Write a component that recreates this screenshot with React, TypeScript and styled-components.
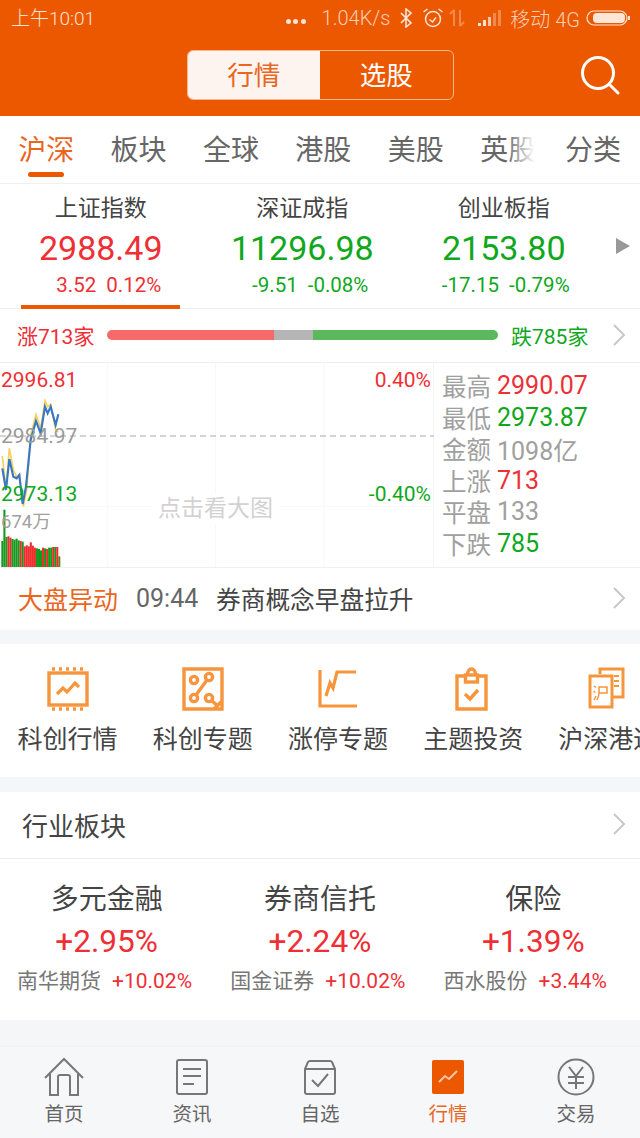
import React from "react";
import styled, { createGlobalStyle } from "styled-components";

const FONT = `Roboto, "Noto Sans CJK SC", sans-serif`;
const ORANGE = "#ec5800";
const RED = "#ee2f35";
const GREEN = "#0fa81c";
const ICON = "#f7953c";

const Global = createGlobalStyle`
  html, body { margin: 0; padding: 0; background: #fff; }
  body { font-family: ${FONT}; width: 640px; height: 1138px; overflow: hidden; }
  * { box-sizing: border-box; }
`;

const Page = styled.div`
  width: 640px; height: 1138px; display: flex; flex-direction: column; background: #f5f6f8; overflow: hidden;
`;
const Header = styled.header`
  height: 116px; background: ${ORANGE}; display: flex; flex-direction: column; flex: none;
`;
const StatusBar = styled.div`
  height: 36px; display: flex; align-items: center; padding: 0 10px 0 11px; color: #fde3d2; font-size: 19px; font-weight: 300; flex: none;
`;
const StatusLeft = styled.span`
  padding-bottom: 4px;
`;
const StatusRight = styled.div`
  margin-left: auto; display: flex; align-items: center; color: #fbd0b5; font-size: 20px;
`;
const StatusIcon = styled.svg<{ $ml: number }>`
  margin-left: ${(p) => p.$ml}px; flex: none;
`;
const Carrier = styled.span`
  margin-left: 9px;
`;
const Dots = styled.span`
  display: flex; gap: 2.5px; margin-right: 16px; padding-top: 6px;
  i { width: 5px; height: 5px; border-radius: 50%; background: #fde6d8; display: block; }
`;
const NavRow = styled.div`
  position: relative; height: 80px; display: flex; justify-content: center; padding-top: 14px;
`;
const Segment = styled.div`
  width: 267px; height: 50px; border: 1px solid #f9b78e; border-radius: 6px; display: flex; overflow: hidden;
`;
const SegItem = styled.div<{ $on?: boolean }>`
  width: 133px; display: flex; align-items: center; justify-content: center; font-size: 26.5px; line-height: 1; padding-top: 2px;
  background: ${(p) => (p.$on ? "#fef4ef" : "transparent")};
  color: ${(p) => (p.$on ? "#e9661f" : "#fff")};
`;
const SearchBtn = styled.svg`
  position: absolute; right: 18px; top: 18px; width: 42px; height: 42px;
`;
const Tabs = styled.nav`
  position: relative; height: 68px; flex: none; background: #fff; display: flex; border-bottom: 1px solid #f0f0f0; padding-left: 0;
`;
const Tab = styled.div<{ $on?: boolean }>`
  width: 92.4px; text-align: center; font-size: 28px; line-height: 69px; flex: none; position: relative;
  color: ${(p) => (p.$on ? "#e9661f" : "#666")};
  ${(p) => p.$on && `&:after{content:"";position:absolute;left:28px;top:56px;width:36px;height:5px;border-radius:3px;background:${ORANGE};}`}
`;
const TabFade = styled.div`
  position: absolute; left: 506px; top: 0; width: 34px; height: 66px; background: linear-gradient(90deg, rgba(255,255,255,0), #fff 85%);
`;
const TabFixed = styled.div`
  position: absolute; right: 0; top: 0; width: 92px; height: 66px; background: #fff; text-align: center; font-size: 28px; line-height: 69px; color: #666;
  padding-right: 2px;
`;
const IndexRow = styled.section`
  height: 125px; flex: none; background: #fff; display: flex; border-bottom: 1px solid #eee; position: relative;
`;
const IndexCol = styled.div<{ $on?: boolean }>`
  width: 201.5px; flex: none; display: flex; flex-direction: column; align-items: center; position: relative;
  ${(p) => p.$on && `&:after{content:"";position:absolute;left:21px;bottom:-1px;width:159px;height:4px;background:${ORANGE};}`}
`;
const IndexName = styled.div`
  font-size: 23px; line-height: 30px; margin-top: 10px; color: #444;
`;
const IndexValue = styled.div<{ $c: string }>`
  font-size: 34px; line-height: 40px; margin-top: 4px; color: ${(p) => p.$c}; font-weight: 400;
`;
const IndexChange = styled.div<{ $c: string; $shift?: number }>`
  font-size: 20.5px; line-height: 24px; margin-top: 5px; color: ${(p) => p.$c}; display: flex; gap: 10px; transform: translateX(${(p) => p.$shift ?? 0}px);
`;
const MoreArrow = styled.div`
  position: absolute; left: 616px; top: 54px; width: 0; height: 0; border-left: 14px solid #999; border-top: 8px solid transparent; border-bottom: 8px solid transparent;
`;
const BreadthRow = styled.section`
  height: 54px; flex: none; background: #fff; display: flex; align-items: center; padding: 0 14px 2px 17px; border-bottom: 1px solid #f0f0f0;
`;
const BreadthText = styled.span<{ $c: string }>`
  font-size: 21px; color: ${(p) => p.$c}; width: 77px; flex: none; white-space: nowrap;
`;
const Bar = styled.div`
  width: 391px; height: 10px; border-radius: 5px; overflow: hidden; display: flex; margin: 0 13px 0 13px; flex: none;
`;
const BarPart = styled.div<{ $w: number; $c: string }>`
  width: ${(p) => p.$w}px; background: ${(p) => p.$c}; flex: none;
`;
const Chevron = styled.svg`
  width: 14px; height: 24px; flex: none; margin-left: auto;
`;
const ChartRow = styled.section`
  height: 205px; flex: none; background: #fff; display: flex; border-bottom: 1px solid #f0f0f0;
`;
const ChartBox = styled.div`
  position: relative; width: 434px; height: 204px; flex: none; border-right: 1px solid #f5f5f5;
`;
const ChartSvg = styled.svg`
  position: absolute; inset: 0; width: 434px; height: 204px;
`;
const ChartLabel = styled.span<{ $c: string; $x: number; $y: number; $right?: boolean; $size?: number }>`
  position: absolute; top: ${(p) => p.$y}px; font-size: ${(p) => p.$size ?? 21}px; line-height: 24px; color: ${(p) => p.$c};
  ${(p) => (p.$right ? `right:${p.$x}px;` : `left:${p.$x}px;`)}
`;
const Tap = styled.span`
  position: absolute; left: 152px; top: 131px; padding: 0 6px; background: #fff; font-size: 23px; line-height: 30px; color: #d2d2d2;
`;
const Stats = styled.div`
  padding: 7px 0 0 8px; display: flex; flex-direction: column;
`;
const Stat = styled.div`
  display: flex; gap: 6px; height: 31.5px; align-items: center; font-size: 24.5px; white-space: nowrap;
`;
const StatKey = styled.span`
  color: #a0a0a0;
`;
const StatVal = styled.span<{ $c: string }>`
  color: ${(p) => p.$c}; font-size: 25px;
`;
const NewsRow = styled.section`
  height: 62px; flex: none; background: #fff; display: flex; align-items: center; padding: 0 14px 2px 18px;
`;
const NewsTag = styled.span`
  font-size: 25px; color: #e9661f; width: 118px; flex: none;
`;
const NewsTime = styled.span`
  font-size: 25px; color: #666; width: 80px; flex: none;
`;
const NewsText = styled.span`
  font-size: 24.7px; color: #444;
`;
const Shortcuts = styled.section`
  margin-top: 14px; height: 133px; flex: none; background: #fff; display: flex; overflow: hidden; padding-left: 0;
`;
const Shortcut = styled.div`
  width: 135.2px; flex: none; display: flex; flex-direction: column; align-items: center; padding-top: 22px; font-size: 25px; color: #444; white-space: nowrap;
  svg { width: 46px; height: 46px; display: block; }
  span { margin-top: 10px; line-height: 36px; }
`;
const Sector = styled.section`
  margin-top: 15px; height: 228px; flex: none; background: #fff; display: flex; flex-direction: column;
`;
const SectorHead = styled.div`
  height: 67px; flex: none; display: flex; align-items: center; padding: 0 14px 2px 22px; font-size: 26px; color: #444; border-bottom: 1px solid #f0f0f0;
`;
const SectorCards = styled.div`
  display: flex;
`;
const SectorCard = styled.div`
  width: 213.3px; flex: none; display: flex; flex-direction: column; align-items: center; padding-top: 22px;
`;
const SectorName = styled.div`
  font-size: 28px; line-height: 38px; color: #444;
`;
const SectorPct = styled.div`
  font-size: 31.6px; line-height: 40px; margin-top: 3px; color: ${RED};
`;
const SectorSub = styled.div`
  display: flex; gap: 11px; font-size: 21px; line-height: 28px; margin-top: 5px; white-space: nowrap; color: #777;
  align-self: flex-start; margin-left: 17px;
  b { font-weight: 400; color: ${RED}; }
`;
const TabBar = styled.footer`
  margin-top: auto; height: 92px; flex: none; background: #f6f7f9; display: flex; border-top: 1px solid #f0f1f3;
`;
const TabBarItem = styled.div<{ $on?: boolean }>`
  width: 128px; flex: none; display: flex; flex-direction: column; align-items: center; padding-top: 10px;
  font-size: 19.5px; color: ${(p) => (p.$on ? "#e9661f" : "#666")};
  svg { width: 40px; height: 40px; display: block; }
  span { margin-top: 5px; line-height: 26px; }
`;

const ChevronIcon = () => (
  <Chevron viewBox="0 0 14 24"><path d="M2 2l10 10L2 22" fill="none" stroke="#c8c8c8" strokeWidth="2" /></Chevron>
);

const blue = "7,325 18,390 28,297 40,350 50,355 58,345 68,432 78,380 92,240 108,183 122,220 135,140 143,160 152,140 167,195 175,163";
const yellow = "7,288 18,385 28,265 40,330 50,350 58,350 70,440 80,390 92,225 108,163 122,205 135,122 143,140 152,133 167,210 175,215";

const volumes: [number, string][] = [
  [78, "g"],[172, "g"],[90, "g"],[92, "r"],[88, "r"],[84, "g"],[82, "g"],[85, "g"],[80, "g"],[78, "r"],[76, "g"],[62, "r"],[65, "r"],[62, "r"],[74, "r"],[64, "r"],[58, "r"],[56, "g"],[54, "g"],[50, "g"],[58, "r"],[56, "g"],[54, "r"],[58, "g"],[58, "g"],[60, "r"],[60, "g"],[60, "r"],[32, "o"],
];

const Shortcut1 = () => (
  <svg viewBox="0 0 46 46" fill="none" stroke={ICON}>
    <rect x="4" y="7" width="38" height="32" strokeWidth="3.4" />
    <path d="M7 3h3M14 3h3M21 3h3M28 3h3M35 3h3M7 43h3M14 43h3M21 43h3M28 43h3M35 43h3" strokeWidth="3.4" />
    <path d="M12 28l6-6 4 4 8-9 4 4" strokeWidth="3.2" />
  </svg>
);
const Shortcut2 = () => (
  <svg viewBox="0 0 46 46" fill="none" stroke={ICON} strokeWidth="3.4">
    <path d="M4 3h38v40H4zM34 43l8-8" />
    <circle cx="14" cy="14" r="3.6" />
    <circle cx="29" cy="11" r="3.6" />
    <circle cx="14" cy="32" r="3.6" />
    <circle cx="29" cy="32" r="3.6" />
    <path d="M27 14L16 29M32 35l6 5" />
  </svg>
);
const Shortcut3 = () => (
  <svg viewBox="0 0 46 46" fill="none" stroke={ICON} strokeWidth="3.2">
    <path d="M5 4v36h37" />
    <path d="M11 30l4-13 3 5 4-16h19" />
  </svg>
);
const Shortcut4 = () => (
  <svg viewBox="0 0 46 46" fill="none" stroke={ICON} strokeWidth="3.4">
    <path d="M15 10H7v33h29V10h-8" />
    <rect x="15.5" y="9" width="12" height="7" />
    <path d="M17.5 9c0-8 8-8 8 0" />
    <path d="M15 28l5 5 8-9" />
  </svg>
);
const Shortcut5 = () => (
  <svg viewBox="0 0 46 46">
    <path d="M15 8V3h23v28h-12" fill="none" stroke={ICON} strokeWidth="3" />
    <rect x="5" y="10" width="22" height="31" fill="#fff" stroke={ICON} strokeWidth="3" />
    <path d="M29 10h5M29 15h5M29 20h5" stroke={ICON} strokeWidth="2" />
    <path d="M9 20l2 1.5M8.5 25l2 1.5M9 34l2-4M14 21h8v6h-8zM14 27c0 3-1 5-2 7" fill="none" stroke={ICON} strokeWidth="1.5" />
  </svg>
);

const HomeIcon = () => (
  <svg viewBox="0 0 40 40" fill="none" stroke="#777" strokeWidth="2">
    <path d="M1 21L20 2l19 19M6 17v21h8V20c0-1 1-2 2-2h8c1 0 2 1 2 2v18h8V17" />
  </svg>
);
const NewsIcon = () => (
  <svg viewBox="0 0 40 40" fill="none" stroke="#777" strokeWidth="2">
    <rect x="5" y="3" width="30" height="34" rx="2" />
    <path d="M11 12h18M11 19h18M11 27h11" />
  </svg>
);
const WatchIcon = () => (
  <svg viewBox="0 0 40 40" fill="none" stroke="#777" strokeWidth="2">
    <path d="M5 12l3-7c.4-1 1-1 2-1h20c1 0 1.6 0 2 1l3 7v23c0 1-1 2-2 2H7c-1 0-2-1-2-2zM5 12h30" />
    <path d="M12 23l6 6 10-12" />
  </svg>
);
const MarketIcon = () => (
  <svg viewBox="0 0 40 40">
    <rect x="4" y="3" width="32" height="34" rx="2" fill={ORANGE} />
    <path d="M11 25l6-6 4 3 8-8" fill="none" stroke="#fbc7a8" strokeWidth="2" />
  </svg>
);
const TradeIcon = () => (
  <svg viewBox="0 0 40 40" fill="none" stroke="#777" strokeWidth="2">
    <circle cx="20" cy="20" r="17.5" />
    <path d="M13 10l7 9 7-9M12 20h16M12 26h16M20 19v13" />
  </svg>
);

const stats: [string, string, string][] = [
  ["最高", "2990.07", RED],
  ["最低", "2973.87", GREEN],
  ["金额", "1098亿", "#a0a0a0"],
  ["上涨", "713", RED],
  ["平盘", "133", "#a0a0a0"],
  ["下跌", "785", GREEN],
];

const sectors = [
  { n: "多元金融", p: "+2.95%", s: "南华期货", q: "+10.02%" },
  { n: "券商信托", p: "+2.24%", s: "国金证券", q: "+10.02%" },
  { n: "保险", p: "+1.39%", s: "西水股份", q: "+3.44%" },
];

export default function App() {
  return (
    <Page>
      <Global />
      <Header>
        <StatusBar>
          <StatusLeft>上午10:01</StatusLeft>
          <StatusRight>
            <Dots><i /><i /><i /></Dots>
            <span>1.04K/s</span>
            <StatusIcon $ml={9} width="14" height="20" viewBox="0 0 14 20" fill="none" stroke="#fde6d8" strokeWidth="1.6">
              <path d="M2 5l10 10-5 4V1l5 4L2 15" />
            </StatusIcon>
            <StatusIcon $ml={9} width="22" height="22" viewBox="0 0 22 22" fill="none" stroke="#fde6d8" strokeWidth="1.5">
              <circle cx="11" cy="12" r="7.5" /><path d="M7.5 12.5l3 2.5 3.5-4.5M1.5 5l4-3M20.5 5l-4-3" />
            </StatusIcon>
            <StatusIcon $ml={5} width="16" height="20" viewBox="0 0 16 20" fill="none" stroke="#f28a4b" strokeWidth="2">
              <path d="M5 2v16M1 6l4-4M11 18V2M15 14l-4 4" />
            </StatusIcon>
            <StatusIcon $ml={13} width="23" height="18" viewBox="0 0 23 18">
              <rect x="0" y="14" width="3" height="3" fill="#fde6d8" /><rect x="5" y="11" width="3" height="6" fill="#fde6d8" /><rect x="10" y="8" width="3" height="9" fill="#f9c8aa" /><rect x="15" y="4" width="3" height="13" fill="#f28a4b" /><rect x="20" y="1" width="3" height="16" fill="#f28a4b" />
            </StatusIcon>
            <Carrier>移动 4G</Carrier>
            <StatusIcon $ml={6} width="44" height="18" viewBox="0 0 44 18">
              <rect x="1" y="2" width="40" height="14" rx="7" fill="none" stroke="#fde6d8" strokeWidth="1.2" />
              <rect x="7" y="4" width="32" height="10" rx="4" fill="#fde6d8" />
              <rect x="42" y="7" width="2" height="4" fill="#fde6d8" />
            </StatusIcon>
          </StatusRight>
        </StatusBar>
        <NavRow>
          <Segment>
            <SegItem $on>行情</SegItem>
            <SegItem>选股</SegItem>
          </Segment>
          <SearchBtn viewBox="0 0 42 42" fill="none" stroke="#fff" strokeWidth="3">
            <circle cx="18" cy="19" r="15.5" />
            <path d="M30 31l8 8" strokeLinecap="round" />
          </SearchBtn>
        </NavRow>
      </Header>
      <Tabs>
        <Tab $on>沪深</Tab><Tab>板块</Tab><Tab>全球</Tab><Tab>港股</Tab><Tab>美股</Tab><Tab>英股</Tab>
        <TabFade />
        <TabFixed>分类</TabFixed>
      </Tabs>
      <IndexRow>
        <IndexCol $on>
          <IndexName>上证指数</IndexName>
          <IndexValue $c={RED}>2988.49</IndexValue>
          <IndexChange $c={RED} $shift={8}><span>3.52</span><span>0.12%</span></IndexChange>
        </IndexCol>
        <IndexCol>
          <IndexName>深证成指</IndexName>
          <IndexValue $c={GREEN}>11296.98</IndexValue>
          <IndexChange $c={GREEN} $shift={8}><span>-9.51</span><span>-0.08%</span></IndexChange>
        </IndexCol>
        <IndexCol>
          <IndexName>创业板指</IndexName>
          <IndexValue $c={GREEN}>2153.80</IndexValue>
          <IndexChange $c={GREEN} $shift={2}><span>-17.15</span><span>-0.79%</span></IndexChange>
        </IndexCol>
        <MoreArrow />
      </IndexRow>
      <BreadthRow>
        <BreadthText $c={RED}>涨713家</BreadthText>
        <Bar>
          <BarPart $w={167} $c="#f86a6a" />
          <BarPart $w={39} $c="#b5b5b5" />
          <BarPart $w={185} $c="#5cb85c" />
        </Bar>
        <BreadthText $c={GREEN}>跌785家</BreadthText>
        <ChevronIcon />
      </BreadthRow>
      <ChartRow>
        <ChartBox>
          <ChartSvg viewBox="0 9 1302 612">
            <path d="M323 9v612M647 9v612M972 9v612M0 440h1302" stroke="#f7f7f7" strokeWidth="3" />
            <path d="M0 228h1302" stroke="#aaa" strokeWidth="3" strokeDasharray="18 12" />
            {volumes.map(([h, c], i) => (
              <rect key={i} x={4 + i * 6.1} y={621 - h} width={6.2} height={h} fill={c === "g" ? "#149a1f" : c === "r" ? "#f12c2c" : "#6f7a1e"} />
            ))}
            <polyline points={yellow} fill="none" stroke="#f8d25a" strokeWidth="5" />
            <polyline points={blue} fill="none" stroke="#3a78c4" strokeWidth="6.5" />
          </ChartSvg>
          <ChartLabel $c={RED} $x={1} $y={5}>2996.81</ChartLabel>
          <ChartLabel $c={RED} $x={2} $y={5} $right>0.40%</ChartLabel>
          <ChartLabel $c="#9a9a9a" $x={1} $y={61}>2984.97</ChartLabel>
          <ChartLabel $c={GREEN} $x={1} $y={119}>2973.13</ChartLabel>
          <ChartLabel $c={GREEN} $x={2} $y={119} $right>-0.40%</ChartLabel>
          <ChartLabel $c="#a0a0a0" $x={1} $y={147} $size={18.5}>674万</ChartLabel>
          <Tap>点击看大图</Tap>
        </ChartBox>
        <Stats>
          {stats.map(([k, v, c]) => (
            <Stat key={k}><StatKey>{k}</StatKey><StatVal $c={c}>{v}</StatVal></Stat>
          ))}
        </Stats>
      </ChartRow>
      <NewsRow>
        <NewsTag>大盘异动</NewsTag>
        <NewsTime>09:44</NewsTime>
        <NewsText>券商概念早盘拉升</NewsText>
        <ChevronIcon />
      </NewsRow>
      <Shortcuts>
        <Shortcut><Shortcut1 /><span>科创行情</span></Shortcut>
        <Shortcut><Shortcut2 /><span>科创专题</span></Shortcut>
        <Shortcut><Shortcut3 /><span>涨停专题</span></Shortcut>
        <Shortcut><Shortcut4 /><span>主题投资</span></Shortcut>
        <Shortcut><Shortcut5 /><span>沪深港通</span></Shortcut>
      </Shortcuts>
      <Sector>
        <SectorHead>行业板块<ChevronIcon /></SectorHead>
        <SectorCards>
          {sectors.map((s) => (
            <SectorCard key={s.n}>
              <SectorName>{s.n}</SectorName>
              <SectorPct>{s.p}</SectorPct>
              <SectorSub><span>{s.s}</span><b>{s.q}</b></SectorSub>
            </SectorCard>
          ))}
        </SectorCards>
      </Sector>
      <TabBar>
        <TabBarItem><HomeIcon /><span>首页</span></TabBarItem>
        <TabBarItem><NewsIcon /><span>资讯</span></TabBarItem>
        <TabBarItem><WatchIcon /><span>自选</span></TabBarItem>
        <TabBarItem $on><MarketIcon /><span>行情</span></TabBarItem>
        <TabBarItem><TradeIcon /><span>交易</span></TabBarItem>
      </TabBar>
    </Page>
  );
}
